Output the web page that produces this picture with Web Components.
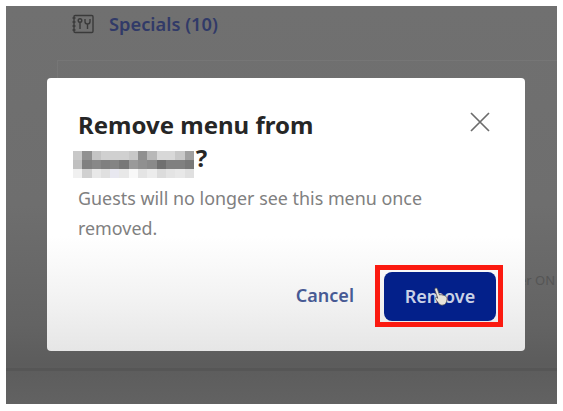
<!DOCTYPE html>
<html>
<head>
<meta charset="utf-8">
<title>Remove menu</title>
<style>
  html, body { margin: 0; background: #fff; }
  body { padding: 6px; width: 551px; height: 399px; overflow: hidden; font-family: "Noto Sans", "Open Sans", Arial, sans-serif; }
</style>
</head>
<body>
<page-backdrop>
  <menu-row slot="top">Specials (10)</menu-row>
  <confirm-dialog>
    <span slot="title">Remove menu from<br><blurred-name></blurred-name>?</span>
    Guests will no longer see this menu once removed.
    <dialog-button slot="cancel" kind="text">Cancel</dialog-button>
    <highlight-box slot="confirm"><dialog-button kind="solid">Remove</dialog-button></highlight-box>
  </confirm-dialog>
</page-backdrop>

<script>
class PageBackdrop extends HTMLElement {
  connectedCallback() {
    this.attachShadow({ mode: 'open' });
    this.shadowRoot.innerHTML = `
      <style>
        :host {
          display: flex;
          flex-direction: column;
          position: relative;
          height: 398px;
          box-sizing: border-box;
          padding: 0 32px 0 41px;
          overflow: hidden;
          background: linear-gradient(#707070 0, #6e6e6e 50%, #636363 80%, #5c5c5c 90%, #626262 100%);
        }
        .top { height: 72px; flex: none; }
        /* faint page card behind the dialog */
        .card {
          position: absolute;
          left: 51px;
          top: 54px;
          right: -20px;
          height: 60px;
          border: 1px solid #767676;
          border-width: 1px 0 0 1px;
        }
        .rule {
          position: absolute;
          left: 0;
          right: 0;
          top: 362px;
          height: 3px;
          background: #565656;
        }
        .behind {
          position: absolute;
          left: 513px;
          top: 265px;
          font-size: 13px;
          color: #555;
          white-space: nowrap;
        }
        .body { position: relative; }
      </style>
      <div class="card"></div>
      <div class="rule"></div>
      <div class="behind">er ON</div>
      <div class="top"><slot name="top"></slot></div>
      <div class="body"><slot></slot></div>
    `;
  }
}

class MenuRow extends HTMLElement {
  connectedCallback() {
    this.attachShadow({ mode: 'open' });
    this.shadowRoot.innerHTML = `
      <style>
        :host {
          display: flex;
          align-items: center;
          gap: 15px;
          height: 35px;
          padding-left: 25px;
          font-size: 18.300px;
          font-weight: 600;
          color: #313a68;
        }
        svg { display: block; flex: none; }
      </style>
      <svg width="22" height="20" viewBox="0 0 22 20" fill="none" stroke="#3a3a3a" stroke-width="1.4">
        <rect x="2" y="1.500" width="19" height="17" rx="1.200"/>
        <path d="M0.500 4h3M0.500 8h3M0.500 12h3M0.500 16h3"/>
        <circle cx="8" cy="6.500" r="1.800"/>
        <path d="M8 8.500V15M13 5v2.500a2.500 2.500 0 0 0 5 0V5M15.500 10v5"/>
      </svg>
      <slot></slot>
    `;
  }
}

class ConfirmDialog extends HTMLElement {
  connectedCallback() {
    this.attachShadow({ mode: 'open' });
    this.shadowRoot.innerHTML = `
      <style>
        :host {
          display: block;
          box-sizing: border-box;
          width: 478px;
          height: 273px;
          padding: 30px 31px 0;
          border-radius: 4px;
          background: linear-gradient(#fff 0, #fff 58%, #f0f0f0 85%, #e6e6e6 100%);
          position: relative;
        }
        .head {
          display: flex;
          justify-content: space-between;
          align-items: flex-start;
        }
        h2 {
          margin: 0;
          height: 66px;
          font-size: 24px;
          line-height: 33px;
          font-weight: 700;
          color: #262626;
        }
        button {
          all: unset;
          display: block;
          margin: 3px 3px 0 0;
        }
        svg { display: block; }
        p {
          margin: 9px 0 0;
          width: 370px;
          font-size: 17.900px;
          line-height: 30px;
          color: #808080;
        }
        .actions {
          position: absolute;
          right: 22px;
          bottom: 24px;
          display: flex;
          align-items: center;
          gap: 21px;
        }
      </style>
      <div class="head">
        <h2><slot name="title"></slot></h2>
        <button aria-label="Close">
          <svg width="22" height="22" viewBox="0 0 22 22" stroke="#6c6c6c" stroke-width="1.700" fill="none">
            <path d="M2 2l18 18M20 2L2 20"/>
          </svg>
        </button>
      </div>
      <p><slot></slot></p>
      <div class="actions">
        <slot name="cancel"></slot>
        <slot name="confirm"></slot>
      </div>
    `;
  }
}

class BlurredName extends HTMLElement {
  connectedCallback() {
    this.attachShadow({ mode: 'open' });
    // the name is pixelated out in the source, so these are mosaic cells
    const cells = [
      'c8c8c8','909090','c4c4c4','d0d0d0','d0d0d0','d0d0d0','c8c8c8','909090','b8b8b8','d8d8d8','d8d8d8','c8c8c8','a0a0a0',
      'c0c0c0','808080','888888','808080','848484','787878','9a9a9a','909090','8a8a8a','707070','808080','808080','787878',
      'f0f0f0','d0d0d0','e8e8e8','e0e0e0','e8e8f0','e8e8e8','f8f8f8','e4e4e4','ececec','dcdcdc','e4e4e4','e8e8e8','e0e0e0'
    ];
    this.shadowRoot.innerHTML = `
      <style>
        :host {
          display: inline-grid;
          grid-template-columns: repeat(13, 9.300px);
          grid-auto-rows: 9px;
          vertical-align: 7px;
          margin: 0 2px 0 -5px;
        }
      </style>
      ${cells.map(c => `<i style="background:#${c}"></i>`).join('')}
    `;
  }
}

class DialogButton extends HTMLElement {
  connectedCallback() {
    this.attachShadow({ mode: 'open' });
    this.shadowRoot.innerHTML = `
      <style>
        :host {
          display: flex;
          align-items: center;
          justify-content: center;
          box-sizing: border-box;
          padding-bottom: 2px;
          font-size: 18px;
          font-weight: 600;
          position: relative;
        }
        :host([kind="text"]) { color: #475a94; height: 49px; }
        :host([kind="solid"]) {
          width: 112px;
          height: 49px;
          border-radius: 8px;
          background: #03208a;
          color: #c9d1e6;
        }
        /* mouse pointer caught in the screenshot */
        svg { position: absolute; left: 49px; top: 15px; }
      </style>
      <slot></slot>
      ${this.getAttribute('kind') === 'solid' ? `
      <svg width="16" height="21" viewBox="0 0 16 21">
        <path d="M2 1.500C2.800.5 4 .8 4.400 2L6.500 8l1.500-.4 1.500.5 1.500.2 1.500.8c1.300.7 1.800 2 1.500 3.600-.3 2-1 3.800-2.500 4.800-1.800 1-4 .8-5.300-.4L2.500 12C1.800 11 2.800 10 3.800 10.600l1 .7L2 3.500c-.2-.8-.3-1.500 0-2z" fill="#e8e4da" stroke="#4a4a4a" stroke-width=".7"/>
      </svg>` : ''}
    `;
  }
}

class HighlightBox extends HTMLElement {
  connectedCallback() {
    this.attachShadow({ mode: 'open' });
    this.shadowRoot.innerHTML = `
      <style>
        :host {
          display: block;
          box-sizing: border-box;
          padding: 2px 2px 1px 4px;
          border: 5px solid #fb1a10;
        }
      </style>
      <slot></slot>
    `;
  }
}

customElements.define('page-backdrop', PageBackdrop);
customElements.define('menu-row', MenuRow);
customElements.define('confirm-dialog', ConfirmDialog);
customElements.define('blurred-name', BlurredName);
customElements.define('dialog-button', DialogButton);
customElements.define('highlight-box', HighlightBox);
</script>
</body>
</html>
